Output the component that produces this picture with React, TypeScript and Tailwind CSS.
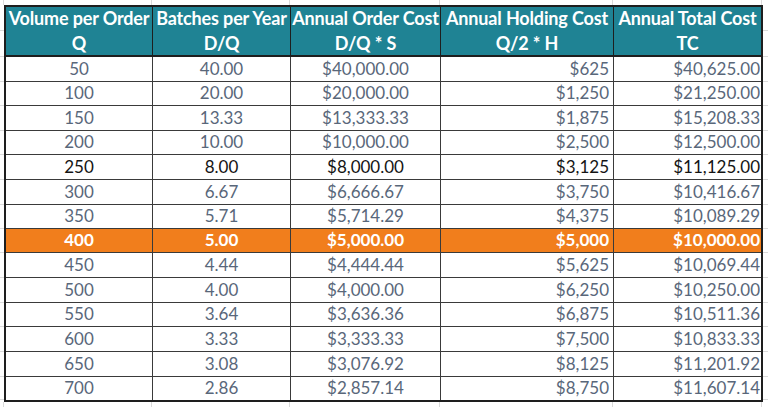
import React from "react";

const rows: [string, string, string, string, string][] = [
  ["50", "40.00", "$40,000.00", "$625", "$40,625.00"],
  ["100", "20.00", "$20,000.00", "$1,250", "$21,250.00"],
  ["150", "13.33", "$13,333.33", "$1,875", "$15,208.33"],
  ["200", "10.00", "$10,000.00", "$2,500", "$12,500.00"],
  ["250", "8.00", "$8,000.00", "$3,125", "$11,125.00"],
  ["300", "6.67", "$6,666.67", "$3,750", "$10,416.67"],
  ["350", "5.71", "$5,714.29", "$4,375", "$10,089.29"],
  ["400", "5.00", "$5,000.00", "$5,000", "$10,000.00"],
  ["450", "4.44", "$4,444.44", "$5,625", "$10,069.44"],
  ["500", "4.00", "$4,000.00", "$6,250", "$10,250.00"],
  ["550", "3.64", "$3,636.36", "$6,875", "$10,511.36"],
  ["600", "3.33", "$3,333.33", "$7,500", "$10,833.33"],
  ["650", "3.08", "$3,076.92", "$8,125", "$11,201.92"],
  ["700", "2.86", "$2,857.14", "$8,750", "$11,607.14"],
];

const rowH = [
  "h-[25px]", "h-[24px]", "h-[25px]", "h-[24px]", "h-[25px]", "h-[25px]", "h-[24px]",
  "h-[24px]", "h-[25px]", "h-[25px]", "h-[24px]", "h-[25px]", "h-[25px]", "h-[23px]",
];

const colW = ["w-[147px]", "w-[138px]", "w-[150px]", "w-[173px]", "w-[147px]"];
const outerColW = ["w-[4px]", "w-[148px]", "w-[138px]", "w-[150px]", "w-[173px]", "w-[149px]", "w-[6px]"];

const headers: [string, string][] = [
  ["Volume per Order", "Q"],
  ["Batches per Year", "D/Q"],
  ["Annual Order Cost", "D/Q * S"],
  ["Annual Holding Cost", "Q/2 * H"],
  ["Annual Total Cost", "TC"],
];

function Strip({ h }: { h: string }) {
  return (
    <div className={`flex ${h}`}>
      {outerColW.map((w, i) => (
        <div key={i} className={`${w} h-full ${i < outerColW.length - 1 ? "border-r border-[#dadada]" : ""}`} />
      ))}
    </div>
  );
}

function SideStrip({ w }: { w: string }) {
  return (
    <div className={`flex flex-col ${w}`}>
      <div className="h-[2px]" />
      <div className="h-[24px] border-b border-[#dadada]" />
      <div className="h-[26px] border-b border-[#dadada]" />
      {rowH.map((h, i) => (
        <div key={i} className={`${h} border-b border-[#dadada]`} />
      ))}
    </div>
  );
}

export default function App() {
  return (
    <div
      className="w-[768px] h-[407px] bg-white overflow-hidden flex flex-col"
      style={{ fontFamily: "Lato, 'Open Sans', sans-serif" }}
    >
      <Strip h="h-[5px]" />
      <div className="flex">
        <SideStrip w="w-[4px]" />
        <div className="border-2 border-[#1e1e1e] flex flex-col">
          <div className="flex h-[50px] border-b-2 border-[#1e1e1e] bg-[#1f8394] text-white font-bold text-[18px] leading-[25px]">
            {headers.map(([a, b], i) => (
              <div
                key={i}
                className={`${colW[i]} ${i < 4 ? "border-r border-[#1e1e1e]" : ""} flex flex-col items-center justify-center whitespace-nowrap tracking-[-0.15px]`}
              >
                <div>{a}</div>
                <div>{b}</div>
              </div>
            ))}
          </div>
          {rows.map((r, ri) => {
            const hi = r[0] === "400";
            const black = r[0] === "250";
            const color = hi ? "bg-[#f17e1c] text-white font-bold" : black ? "text-[#141414]" : "text-[#59677a]";
            return (
              <div
                key={ri}
                className={`flex ${rowH[ri]} ${ri < rows.length - 1 ? "border-b border-[#3a3a3a]" : ""} ${color} text-[17px]`}
              >
                {r.map((c, ci) => (
                  <div
                    key={ci}
                    className={`${colW[ci]} ${ci < 4 ? "border-r border-[#3a3a3a]" : ""} flex items-center whitespace-nowrap ${
                      ci < 3 ? "justify-center" : ci === 3 ? "justify-end pr-[4px]" : "justify-end pr-[1px]"
                    }`}
                  >
                    {c}
                  </div>
                ))}
              </div>
            );
          })}
        </div>
        <SideStrip w="w-[5px]" />
      </div>
      <Strip h="h-[6px]" />
    </div>
  );
}
